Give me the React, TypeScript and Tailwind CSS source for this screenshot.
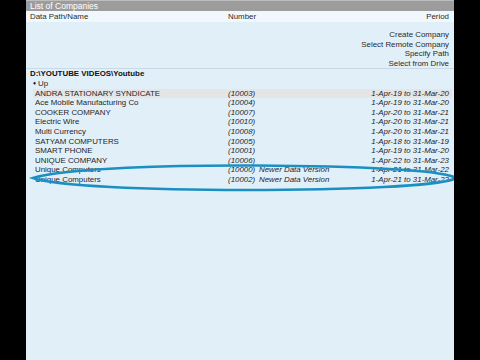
const companies = [
  { name: 'ANDRA STATIONARY SYNDICATE', num: '(10003)', note: '', period: '1-Apr-19 to 31-Mar-20', active: true },
  { name: 'Ace Mobile Manufacturing Co', num: '(10004)', note: '', period: '1-Apr-19 to 31-Mar-20' },
  { name: 'COOKER COMPANY', num: '(10007)', note: '', period: '1-Apr-20 to 31-Mar-21' },
  { name: 'Electric Wire', num: '(10010)', note: '', period: '1-Apr-20 to 31-Mar-21' },
  { name: 'Multi Currency', num: '(10008)', note: '', period: '1-Apr-20 to 31-Mar-21' },
  { name: 'SATYAM COMPUTERS', num: '(10005)', note: '', period: '1-Apr-18 to 31-Mar-19' },
  { name: 'SMART PHONE', num: '(10001)', note: '', period: '1-Apr-19 to 31-Mar-20' },
  { name: 'UNIQUE COMPANY', num: '(10006)', note: '', period: '1-Apr-22 to 31-Mar-23' },
  { name: 'Unique Computers', num: '(10000)', note: 'Newer Data Version', period: '1-Apr-21 to 31-Mar-22' },
  { name: 'Unique Computers', num: '(10002)', note: 'Newer Data Version', period: '1-Apr-21 to 31-Mar-22' },
];

const menu = ['Create Company', 'Select Remote Company', 'Specify Path', 'Select from Drive'];

export default function App() {
  return (
    <div
      className="w-[480px] h-[360px] bg-black flex overflow-hidden text-[7.9px] text-[#1f1f1f]"
      style={{ fontFamily: '"Liberation Sans", Arial, sans-serif' }}
    >
      <div className="ml-[26px] w-[428px] h-full bg-[#e1eff9] relative overflow-hidden flex flex-col">
        {/* Title bar */}
        <div className="h-[11px] bg-[#9c9c9c] border-t border-[#bdbdbd] text-white text-[8.5px] px-[4px] leading-[10px]">
          List of Companies
        </div>

        {/* Column header */}
        <div className="h-[11px] bg-[#f1f8fd] flex items-center px-[4px] text-[#2a2a2a]">
          <div className="w-[198px]">Data Path/Name</div>
          <div className="flex-1">Number</div>
          <div className="pr-[1px]">Period</div>
        </div>

        {/* Actions */}
        <div className="pt-[8px] pr-[5px] border-b border-[#c9d9e7] flex flex-col items-end text-[#2a2a2a]">
          {menu.map((m) => (
            <div key={m} className="h-[9.6px] leading-[9.6px]">{m}</div>
          ))}
        </div>

        {/* Path */}
        <div className="h-[9.6px] leading-[9.6px] px-[4px] font-bold text-[#111]">D:\YOUTUBE VIDEOS\Youtube</div>
        <div className="h-[9.6px] leading-[9.6px] pl-[7px] flex items-center gap-[2px]">
          <span className="text-[6px]">♦</span>
          <span>Up</span>
        </div>

        {/* Companies */}
        <div className="flex flex-col">
          {companies.map((c, i) => (
            <div
              key={i}
              className={`h-[9.6px] leading-[9.6px] ml-[7px] mr-[2px] pr-[3px] flex ${c.active ? 'bg-[#e5e5e5]' : ''}`}
            >
              <div className="w-[195px] pl-[2px]">{c.name}</div>
              <div className="w-[31px] italic">{c.num}</div>
              <div className="flex-1 italic">{c.note}</div>
              <div className="italic">{c.period}</div>
            </div>
          ))}
        </div>

        {/* Hand-drawn highlight ellipse */}
        <svg className="absolute left-0 top-0 pointer-events-none" width="440" height="200" viewBox="0 0 440 200">
          <path
            d="M 7 178 C 40 168, 150 165, 230 165.5 C 330 166, 418 170, 430 178 C 418 186, 320 190, 220 190 C 120 190, 30 186, 7 178 Z"
            fill="none"
            stroke="#1b8fc2"
            strokeWidth="2.6"
          />
        </svg>
      </div>
    </div>
  );
}
